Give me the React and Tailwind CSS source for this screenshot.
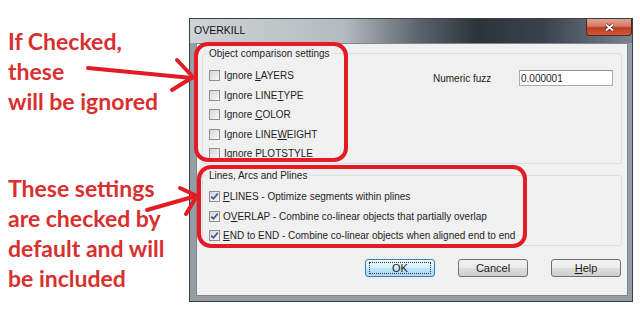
import React from 'react'

const ui = { fontFamily: '"Liberation Sans", Arial, sans-serif' }
const note = { fontFamily: 'Lato, "Open Sans", sans-serif' }

function Box({ checked }) {
  return (
    <span className="w-[11px] h-[11px] shrink-0 border border-[#8e8f8f] bg-[linear-gradient(135deg,#d6d6d6,#f7f7f7)] flex items-center justify-center">
      {checked && (
        <svg width="9" height="9" viewBox="0 0 9 9">
          <path d="M1.3 4.6 L3.4 6.8 L7.8 1.6" fill="none" stroke="#3d5a8e" strokeWidth="1.7" />
        </svg>
      )}
    </span>
  )
}

function Row({ checked, gap, children }) {
  return (
    <div className={`flex items-center h-[19.5px] ${gap}`}>
      <Box checked={checked} />
      <span className="whitespace-nowrap">{children}</span>
    </div>
  )
}

function Btn({ children, primary }) {
  return (
    <button
      className={`w-[70px] h-[18px] rounded-[3px] border flex items-center justify-center text-[11px] text-[#1a1a1a] ${
        primary
          ? 'border-[#3c7fb1] bg-[linear-gradient(#eaf6fd_0%,#d9f0fc_50%,#bee6fd_51%,#a7d9f5_100%)]'
          : 'border-[#707070] bg-[linear-gradient(#f2f2f2_0%,#ebebeb_50%,#dddddd_51%,#cfcfcf_100%)]'
      }`}
    >
      {primary ? (
        <span className="w-[62px] h-[12px] border border-dotted border-[#333] flex items-center justify-center">
          {children}
        </span>
      ) : (
        children
      )}
    </button>
  )
}

function Dialog() {
  return (
    <div className="w-[444px] h-[284px] border border-[#39414a] bg-[#959da5] flex flex-col" style={ui}>
      {/* title bar */}
      <div className="h-[24px] flex items-start justify-between bg-[linear-gradient(90deg,#cfd3d7_0%,#b4bac0_35%,#5a626b_52%,#2c333b_65%,#3a424b_80%,#7a838c_100%)]">
        <span className="self-center pl-[4px] text-[10.5px] text-[#111]">OVERKILL</span>
        <div className="w-[46px] h-[17px] rounded-b-[4px] border border-t-0 border-[#5b2219] bg-[linear-gradient(#e3a392_0%,#d27a65_45%,#bd3b22_55%,#cc5a40_100%)] flex items-center justify-center">
          <svg width="11" height="9" viewBox="0 0 11 9">
            <path d="M2 1.5 L9 7.5 M9 1.5 L2 7.5" stroke="#5a1a10" strokeWidth="3.2" />
            <path d="M2 1.5 L9 7.5 M9 1.5 L2 7.5" stroke="#fff" strokeWidth="1.8" />
          </svg>
        </div>
      </div>

      {/* client area */}
      <div className="flex-1 ml-[6px] mr-[4px] mb-[5px] bg-[#f0f0f0] border border-[#7d858d] text-[10px] text-[#1e1e1e] flex flex-col">
        <fieldset className="mt-[3px] mx-[5px] h-[117px] border border-[#d5dfe5] rounded-[3px] px-[6px] flex justify-between">
          <legend className="px-[2px] -ml-[2px] leading-[13px]">Object comparison settings</legend>
          <div className="pt-[6px] flex flex-col">
            <Row gap="gap-[4px]">Ignore <u>L</u>AYERS</Row>
            <Row gap="gap-[4px]">Ignore LINE<u>T</u>YPE</Row>
            <Row gap="gap-[4px]">Ignore <u>C</u>OLOR</Row>
            <Row gap="gap-[4px]">Ignore LINE<u>W</u>EIGHT</Row>
            <Row gap="gap-[4px]">Ignore PLOT<u>S</u>TYLE</Row>
          </div>
          <div className="self-start mt-[10px] mr-[2px] flex items-center">
            <span className="w-[86px]">Numeric fuzz</span>
            <div className="w-[94px] h-[16px] bg-white border border-[#abadb3] border-t-[#8e9196] flex items-center pl-[1px]">
              0.000001
            </div>
          </div>
        </fieldset>

        <fieldset className="mt-[5px] mx-[5px] h-[77px] border border-[#d5dfe5] rounded-[3px] px-[6px]">
          <legend className="px-[2px] -ml-[2px] leading-[13px]">Lines, Arcs and Plines</legend>
          <div className="pt-[5px] flex flex-col">
            <Row checked gap="gap-[3px]"><u>P</u>LINES - Optimize segments within plines</Row>
            <Row checked gap="gap-[3px]">O<u>V</u>ERLAP - Combine co-linear objects that partially overlap</Row>
            <Row checked gap="gap-[3px]"><u>E</u>ND to END - Combine co-linear objects when aligned end to end</Row>
          </div>
        </fieldset>

        <div className="mt-[13px] pr-[6px] flex justify-end gap-[23px]">
          <Btn primary>OK</Btn>
          <Btn>Cancel</Btn>
          <Btn><span><u>H</u>elp</span></Btn>
        </div>
      </div>
    </div>
  )
}

export default function App() {
  return (
    <div className="relative w-[640px] h-[332px] bg-white overflow-hidden flex">
      {/* annotations on the left */}
      <div className="w-[189px] shrink-0 pl-[8px] pt-[26px] text-[23px] leading-[30px] font-bold text-[#d8302f]" style={note}>
        <div>If Checked,</div>
        <div>these</div>
        <div>will be ignored</div>
        <div className="mt-[57px]">These settings</div>
        <div>are checked by</div>
        <div>default and will</div>
        <div>be included</div>
      </div>

      <div className="pt-[18px]">
        <Dialog />
      </div>

      {/* red markup drawn over the screenshot */}
      <svg className="absolute inset-0 pointer-events-none" width="640" height="332" viewBox="0 0 640 332">
        <g fill="none" stroke="#e21b24" strokeWidth="4" strokeLinecap="round" strokeLinejoin="round">
          <rect x="196" y="44" width="150" height="116" rx="12" />
          <rect x="199" y="167" width="326" height="79" rx="12" />
          <path d="M88 68 L192 78" />
          <path d="M177 60 L193 77 L172 90" />
          <path d="M147 210 L196 196" />
          <path d="M180 188 L197 196 L186 214" />
        </g>
      </svg>
    </div>
  )
}
